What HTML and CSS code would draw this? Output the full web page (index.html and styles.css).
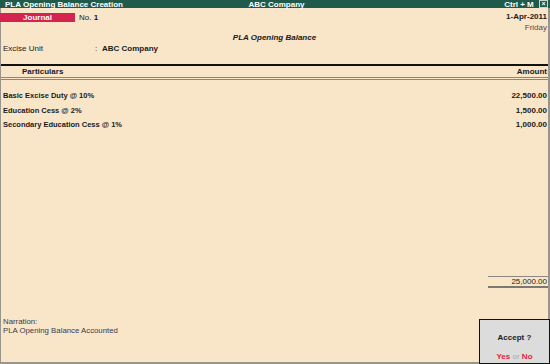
FILE: index.html
```html
<!DOCTYPE html>
<html lang="en">
<head>
    <meta charset="UTF-8" />
    <title>PLA Opening Balance Creation</title>
    <link rel="stylesheet" href="styles.css">
</head>
<body>
    <div class="titlebar">
        <span class="tb-left">PLA Opening Balance Creation</span>
        <span class="tb-center">ABC Company</span>
        <span class="tb-right">Ctrl + M <span class="close-box">&times;</span></span>
    </div>

    <div class="screen">
        <div class="voucher-head">
            <div class="vh-left">
                <span class="vtype">Journal</span>
                <span class="vno">No. <b>1</b></span>
            </div>
            <div class="vh-right">
                <div class="vdate">1-Apr-2011</div>
                <div class="vday">Friday</div>
            </div>
        </div>

        <div class="vtitle">PLA Opening Balance</div>

        <div class="excise-row">
            <span class="ex-label">Excise Unit</span>
            <span class="ex-colon">:</span>
            <span class="ex-value">ABC Company</span>
        </div>

        <div class="table-head">
            <span class="th-part">Particulars</span>
            <span class="th-amt">Amount</span>
        </div>

        <div class="rows">
            <div class="row"><span class="ledger">Basic Excise Duty @ 10%</span><span>22,500.00</span></div>
            <div class="row"><span class="ledger">Education Cess @ 2%</span><span>1,500.00</span></div>
            <div class="row"><span class="ledger">Secondary Education Cess @ 1%</span><span>1,000.00</span></div>
        </div>

        <div class="total-row">
            <span class="total">25,000.00</span>
        </div>

        <div class="narration">
            <div class="nar-label">Narration:</div>
            <div class="nar-text">PLA Opening Balance Accounted</div>
        </div>

        <div class="accept-box">
            <div class="accept-q">Accept ?</div>
            <div class="accept-opts"><span class="yn">Yes</span> <span class="or">or</span> <span class="yn">No</span></div>
        </div>
    </div>
</body>
</html>
```

FILE: styles.css
```css
body {
    margin: 0;
    width: 550px;
    height: 364px;
    overflow: hidden;
    background: #f9e5c7;
    font-family: "Liberation Sans", Arial, sans-serif;
    font-size: 8px;
    color: #1a1a1a;
}
.titlebar {
    height: 8px;
    line-height: 9px;
    background: #1f5a4b;
    color: white;
    font-weight: bold;
    display: grid;
    grid-template-columns: 1fr auto 1fr;
    padding: 0 2px 0 5px;
}
.tb-center {
    text-align: center;
}
.tb-right {
    text-align: right;
}
.close-box {
    display: inline-block;
    width: 7px;
    height: 6px;
    line-height: 6px;
    margin-left: 3px;
    border: 1px solid #c8d6cf;
    font-size: 7px;
    text-align: center;
    vertical-align: 1px;
}
.screen {
    position: relative;
    height: 354px;
    border-left: 1px solid #9a958c;
    border-right: 2px solid #9a958c;
    border-bottom: 2px solid #9a958c;
    display: flex;
    flex-direction: column;
}
.voucher-head {
    display: flex;
    justify-content: space-between;
    padding-top: 5px;
}
.vh-left {
    display: flex;
    align-items: center;
    height: 9px;
}
.vtype {
    width: 75px;
    height: 9px;
    line-height: 9px;
    margin-left: -1px;
    background: #d5234f;
    color: white;
    font-weight: bold;
    text-align: center;
}
.vno {
    margin-left: 4px;
}
.vh-right {
    text-align: right;
    padding-right: 1px;
    line-height: 10px;
}
.vdate {
    font-weight: bold;
    margin-top: -1px;
}
.vday {
    color: #5e3f55;
    margin-top: 1px;
}
.vtitle {
    text-align: center;
    font-style: italic;
    font-weight: bold;
    margin-top: 0;
    line-height: 10px;
}
.excise-row {
    display: flex;
    line-height: 10px;
    margin-top: 1px;
    padding-left: 2px;
}
.ex-label {
    width: 92px;
}
.ex-colon {
    width: 7px;
}
.ex-value {
    font-weight: bold;
}
.table-head {
    display: flex;
    justify-content: space-between;
    margin-top: 10px;
    height: 11px;
    line-height: 11px;
    border-top: 2px solid #111;
    border-bottom: 3px double #8c877e;
    font-weight: bold;
    padding: 0 1px 0 21px;
}
.rows {
    padding-top: 9px;
    flex: 1;
}
.row {
    display: flex;
    justify-content: space-between;
    height: 14.5px;
    line-height: 14px;
    font-weight: bold;
    padding: 0 1px 0 2px;
}
.ledger {
    font-size: 7.5px;
}
.total-row {
    display: flex;
    justify-content: flex-end;
    margin-bottom: 29px;
}
.total {
    width: 59px;
    text-align: right;
    line-height: 9px;
    padding-right: 1px;
    border-top: 1px solid #8c877e;
    border-bottom: 2px solid #7d786f;
}
.narration {
    padding-left: 2px;
    line-height: 9px;
    font-size: 7.8px;
    color: #3a3a4e;
    margin-bottom: 27px;
}
.accept-box {
    position: absolute;
    right: -2px;
    bottom: -2px;
    width: 69px;
    height: 43px;
    background: #dcdcdc;
    border: 1px solid #111;
    text-align: center;
}
.accept-q {
    font-weight: bold;
    margin-top: 13px;
}
.accept-opts {
    margin-top: 10px;
    font-weight: bold;
}
.yn {
    color: #e8203a;
}
.or {
    color: #a8a8a8;
    font-weight: normal;
}
```
